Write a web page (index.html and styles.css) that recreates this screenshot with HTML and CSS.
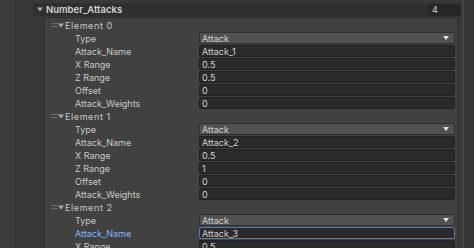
FILE: index.html
```html
<!DOCTYPE html>
<html lang="en">
<head>
  <meta charset="UTF-8" />
  <title>Inspector</title>
  <link rel="stylesheet" href="styles.css">
</head>
<body>
  <div class="inspector">
    <div class="gutter"></div>
    <div class="content">
      <div class="array-header">
        <svg class="fold" width="6" height="5" viewBox="0 0 6 5"><path d="M0 0.5h6L3 4.5z" fill="#a8a8a8"/></svg>
        <span class="title">Number_Attacks</span>
        <div class="size">4</div>
      </div>

      <div class="list">
        <div class="element">
          <div class="el-head">
            <span class="handle"></span>
            <svg class="fold" width="6" height="5" viewBox="0 0 6 5"><path d="M0 0.5h6L3 4.5z" fill="#a8a8a8"/></svg>
            <span class="el-name">Element 0</span>
          </div>
          <div class="prop"><span class="label">Type</span><div class="dropdown">Attack<svg width="6" height="4" viewBox="0 0 6 4"><path d="M0 0h6L3 4z" fill="#e0e0e0"/></svg></div></div>
          <div class="prop"><span class="label">Attack_Name</span><div class="field">Attack_1</div></div>
          <div class="prop"><span class="label">X Range</span><div class="field">0.5</div></div>
          <div class="prop"><span class="label">Z Range</span><div class="field">0.5</div></div>
          <div class="prop"><span class="label">Offset</span><div class="field">0</div></div>
          <div class="prop"><span class="label">Attack_Weights</span><div class="field">0</div></div>
        </div>

        <div class="element">
          <div class="el-head">
            <span class="handle"></span>
            <svg class="fold" width="6" height="5" viewBox="0 0 6 5"><path d="M0 0.5h6L3 4.5z" fill="#a8a8a8"/></svg>
            <span class="el-name">Element 1</span>
          </div>
          <div class="prop"><span class="label">Type</span><div class="dropdown">Attack<svg width="6" height="4" viewBox="0 0 6 4"><path d="M0 0h6L3 4z" fill="#e0e0e0"/></svg></div></div>
          <div class="prop"><span class="label">Attack_Name</span><div class="field">Attack_2</div></div>
          <div class="prop"><span class="label">X Range</span><div class="field">0.5</div></div>
          <div class="prop"><span class="label">Z Range</span><div class="field">1</div></div>
          <div class="prop"><span class="label">Offset</span><div class="field">0</div></div>
          <div class="prop"><span class="label">Attack_Weights</span><div class="field">0</div></div>
        </div>

        <div class="element">
          <div class="el-head">
            <span class="handle"></span>
            <svg class="fold" width="6" height="5" viewBox="0 0 6 5"><path d="M0 0.5h6L3 4.5z" fill="#a8a8a8"/></svg>
            <span class="el-name">Element 2</span>
          </div>
          <div class="prop"><span class="label">Type</span><div class="dropdown">Attack<svg width="6" height="4" viewBox="0 0 6 4"><path d="M0 0h6L3 4z" fill="#e0e0e0"/></svg></div></div>
          <div class="prop focused"><span class="label">Attack_Name</span><div class="field">Attack_3</div></div>
          <div class="prop"><span class="label">X Range</span><div class="field">0.5</div></div>
        </div>
      </div>
    </div>
    <div class="scrollbar"></div>
  </div>
</body>
</html>
```

FILE: styles.css
```css
* {
  box-sizing: border-box;
}
html, body {
  margin: 0;
  height: 248px;
  overflow: hidden;
}
body {
  background: #383838;
  font-family: Inter, "Liberation Sans", sans-serif;
  font-size: 9px;
  color: #c8c8c8;
}

.inspector {
  display: flex;
  height: 248px;
}
.gutter {
  width: 16px;
  background: #3c3c3c;
  border-right: 1px solid #333;
}
.content {
  flex: 1;
  padding-top: 3px;
}
.scrollbar {
  width: 12px;
  background: #353535;
  border-left: 2px solid #454545;
}

.array-header {
  display: flex;
  align-items: center;
  height: 13px;
  margin: 0 1px 1px 17px;
  background: #2f2f2f;
  padding-left: 4px;
}
.array-header .fold {
  margin-right: 3px;
}
.title {
  flex: 1;
  color: #d2d2d2;
  font-size: 9.5px;
  font-weight: 600;
}
.size {
  width: 33px;
  height: 12px;
  line-height: 12px;
  background: #262626;
  padding-left: 4px;
  color: #d2d2d2;
}

.list {
  margin: 0 4px 0 28px;
  background: #414141;
  border: 1px solid #2e2e2e;
  border-bottom: none;
  padding: 1px 2px 0 1px;
}

.el-head {
  display: flex;
  align-items: center;
  height: 12px;
  margin-bottom: 1px;
  padding-left: 5px;
}
.handle {
  width: 7px;
  height: 4px;
  border-top: 1px solid #6a6a6a;
  border-bottom: 1px solid #6a6a6a;
}
.el-head .fold {
  margin-right: 1px;
}
.el-name {
  letter-spacing: 0.6px;
}

.prop {
  display: flex;
  align-items: center;
  height: 12px;
  margin-bottom: 1px;
}
.label {
  width: 153px;
  padding-left: 29px;
  white-space: nowrap;
}
.field, .dropdown {
  flex: 1;
  height: 12px;
  line-height: 11px;
  padding-left: 2px;
  color: #d2d2d2;
  border: 1px solid #212121;
  border-radius: 2px;
  background: #2a2a2a;
}
.dropdown {
  display: flex;
  justify-content: space-between;
  align-items: center;
  background: #515151;
  border-color: #303030;
  padding-right: 5px;
}
.focused .label {
  color: #81b4ff;
}
.focused .field {
  border-color: #5a7aa6;
}
```
